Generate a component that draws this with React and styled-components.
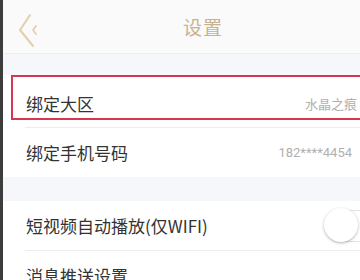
import React from 'react';
import styled, { createGlobalStyle } from 'styled-components';

const GlobalStyle = createGlobalStyle`
  html, body {
    margin: 0;
    padding: 0;
    width: 360px;
    height: 280px;
    overflow: hidden;
    background: #3d3d3d;
  }
  body {
    font-family: "Noto Sans CJK SC", "Noto Sans", Roboto, sans-serif;
  }
`;

const settings = [
  { section: 'account', rows: [
    { label: '绑定大区', value: '水晶之痕', shift: 0, marked: true, tall: true },
    { label: '绑定手机号码', value: '182****4454', shift: 5 }
  ] },
  { section: 'media', rows: [
    { label: '短视频自动播放(仅WIFI)', toggle: true },
    { label: '消息推送设置' }
  ] }
];

const App = () => {
  return (
    <>
      <GlobalStyle />
      <Screen>
        <EdgeStrip />
        <Frame>
          <Header>
            <BackButton>
              <svg width="22" height="36" viewBox="0 0 22 36" fill="none">
                <path d="M13 2 L3 17 L16 33" stroke="#e2cfae" strokeWidth="2" strokeLinecap="round" strokeLinejoin="round" />
                <path d="M19 13 L16 17 L19 21" stroke="#e2cfae" strokeWidth="1.7" strokeLinecap="round" strokeLinejoin="round" />
              </svg>
            </BackButton>
            <Title>设置</Title>
          </Header>

          {settings.map((group) => (
            <Group key={group.section}>
              {group.rows.map((row, i) => (
                <React.Fragment key={row.label}>
                  {i > 0 ? <Divider /> : null}
                  <Row $tall={row.tall}>
                    <Label>{row.label}</Label>
                    {row.value ? <Value $shift={row.shift}>{row.value}</Value> : null}
                    {row.toggle ? (
                      <Toggle>
                        <Knob />
                      </Toggle>
                    ) : null}
                    {row.marked ? <Highlight /> : null}
                  </Row>
                </React.Fragment>
              ))}
            </Group>
          ))}
        </Frame>
      </Screen>
    </>
  );
};

const Screen = styled.div`
  display: flex;
  align-items: flex-start;
  width: 360px;
  height: 280px;
  overflow: hidden;
`;

const EdgeStrip = styled.div`
  flex: 0 0 3px;
  align-self: stretch;
  background: #3d3d3d;
`;

const Frame = styled.div`
  flex: 0 0 400px;
  display: flex;
  flex-direction: column;
  background: #f5f7fa;

  & > * {
    flex-shrink: 0;
  }
`;

const Header = styled.header`
  position: relative;
  display: flex;
  align-items: center;
  justify-content: center;
  height: 53px;
  background: #fafafa;
  border-bottom: 1px solid #eeeeee;
`;

const BackButton = styled.div`
  position: absolute;
  left: 14px;
  top: 13px;
  width: 22px;
  height: 36px;
  display: flex;
`;

const Title = styled.h1`
  margin: 0;
  font-size: 19px;
  font-weight: 400;
  color: #c9b18f;
  letter-spacing: 1px;
`;

const Group = styled.section`
  margin-top: 21px;
  background: #ffffff;
  display: flex;
  flex-direction: column;

  & + & {
    margin-top: 24px;
  }
`;

const Row = styled.div`
  position: relative;
  display: flex;
  align-items: center;
  height: ${(p) => (p.$tall ? '52px' : '49px')};
  padding: ${(p) => (p.$tall ? '4px' : '0')} 16px 0 23px;
  box-sizing: border-box;
`;

const Label = styled.span`
  flex: 1;
  font-size: 17px;
  color: #333333;
  white-space: nowrap;
`;

const Value = styled.span`
  font-size: 13px;
  color: #b0b0b0;
  margin-right: ${(p) => 30 + p.$shift}px;
  font-family: Roboto, "Noto Sans CJK SC", sans-serif;
`;

const Divider = styled.div`
  height: 1px;
  margin-left: 22px;
  background: #ececec;
`;

const Toggle = styled.div`
  position: relative;
  width: 60px;
  height: 30px;
  margin-left: auto;
  border-radius: 15px;
  background: #ffffff;
  border: 1px solid #e3e3e3;
`;

const Knob = styled.div`
  position: absolute;
  left: -2px;
  top: -3px;
  width: 34px;
  height: 34px;
  border-radius: 50%;
  background: #ffffff;
  box-shadow: 0 1px 3px rgba(0, 0, 0, 0.3);
`;

const Highlight = styled.div`
  position: absolute;
  left: 8px;
  top: 0;
  width: 420px;
  height: 45px;
  box-sizing: border-box;
  border: 2.5px solid #d6364e;
  pointer-events: none;
`;

export default App;
